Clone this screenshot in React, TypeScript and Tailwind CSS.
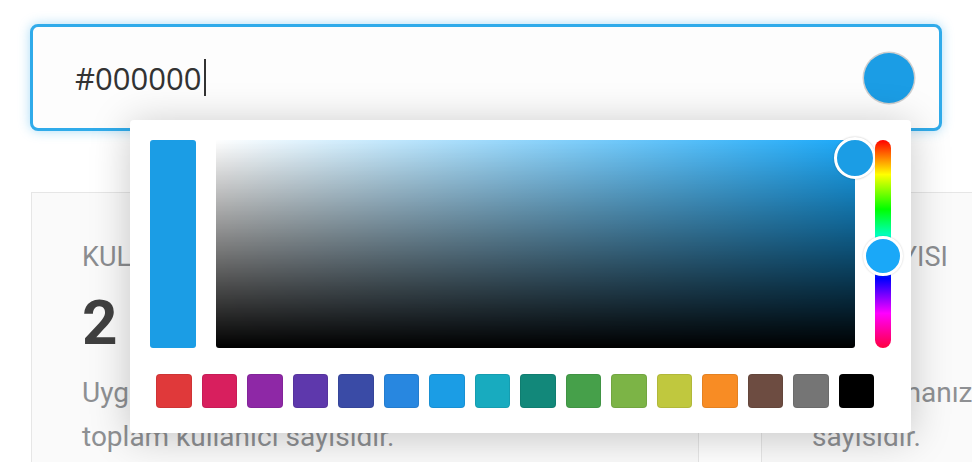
import React from 'react';

interface StatCard {
  label: string;
  value: number;
  lines: string[];
}

const swatches = [
  '#e0393a',
  '#d81f5e',
  '#8e28a6',
  '#5e38ac',
  '#3a4ba6',
  '#2887e0',
  '#1b9de5',
  '#18abbf',
  '#12887a',
  '#46a04a',
  '#7cb446',
  '#c0c83e',
  '#f88c24',
  '#6d4c41',
  '#757575',
  '#000000',
];

const stats: StatCard[] = [
  { label: 'Kullanıcı sayısı', value: 2, lines: ['Uygulamanızdaki', 'toplam kullanıcı sayısıdır.'] },
  { label: 'Rol sayısı', value: 3, lines: ['Uygulamanızdaki toplam rol', 'sayısıdır.'] },
];

const selected = '#1b9de5';
const hue = '#1aa8f8';

const ColorPopover: React.FC = () => (
  <div className="absolute left-[100px] top-[96px] z-10 w-[781px] rounded-[4px] bg-white px-[20px] pt-[20px] pb-[25px] shadow-[0_4px_40px_rgba(0,0,0,0.22)]">
    <div className="flex h-[208px] gap-[20px]">
      {/* current colour */}
      <div className="w-[46px] rounded-[3px]" style={{ backgroundColor: selected }} />

      {/* saturation / value area */}
      <div
        className="relative w-[640px] rounded-[3px]"
        style={{
          background: `linear-gradient(to top, #000, rgba(0,0,0,0)), linear-gradient(to right, #fff, ${hue})`,
        }}
      >
        <div
          className="absolute right-[-21px] top-[-3px] h-[42px] w-[42px] rounded-full border-[3px] border-white shadow-[0_0_2px_rgba(0,0,0,0.25)]"
          style={{ backgroundColor: selected }}
        />
      </div>

      {/* hue rail */}
      <div className="relative w-[16px] rounded-full bg-[linear-gradient(to_bottom,#ff0000_0%,#ffff00_16.6%,#00ff00_33.3%,#00ffff_50%,#0000ff_66.6%,#ff00ff_83.3%,#ff0040_100%)]">
        <div
          className="absolute left-[-12px] top-[96px] h-[40px] w-[40px] rounded-full border-[3px] border-white shadow-[0_0_2px_rgba(0,0,0,0.2)]"
          style={{ backgroundColor: hue }}
        />
      </div>
    </div>

    <div className="ml-[6px] mt-[26px] grid w-[718px] grid-cols-16 gap-[10px]">
      {swatches.map((c) => (
        <div
          key={c}
          className="h-[34px] rounded-[4px] shadow-[inset_0_0_0_1px_rgba(0,0,0,0.08)]"
          style={{ backgroundColor: c }}
        />
      ))}
    </div>
  </div>
);

const Card: React.FC<{ data: StatCard }> = ({ data }) => (
  <div className="h-[300px] w-[668px] shrink-0 border border-[#e6e6e6] bg-[#fafafa] px-[50px] pt-[44px] font-['Roboto',sans-serif]">
    <div className="text-[27px] uppercase leading-[40px] text-[#8b8d90]">{data.label}</div>
    <div className="mt-[15px] text-[62px] font-bold leading-none text-[#404040]">{data.value}</div>
    <p className="mt-[17px] text-[28px] leading-[44px] text-[#8e9093]">
      {data.lines[0]}
      <br />
      {data.lines[1]}
    </p>
  </div>
);

export default function App() {
  return (
    <div className="relative h-[462px] w-[972px] overflow-hidden bg-white px-[30px] pt-[24px]">
      <div className="relative">
        <div className="flex h-[107px] items-center rounded-[8px] border-[3px] border-[#30abea] bg-[#fdfdfd] pl-[42px] pr-[25px] shadow-[0_0_12px_rgba(48,171,234,0.4)]">
          <span className="font-['Open_Sans',sans-serif] text-[31px] leading-[42px] text-[#333]">#000000</span>
          <span className="ml-[3px] h-[37px] w-[2px] bg-[#333]" />
          <div
            className="ml-auto h-[50px] w-[50px] rounded-full shadow-[0_0_0_1.5px_rgba(0,0,0,0.18)]"
            style={{ backgroundColor: selected }}
          />
        </div>
        <ColorPopover />
      </div>

      <div className="ml-[1px] mt-[61px] flex gap-[62px]">
        {stats.map((s) => (
          <Card key={s.label} data={s} />
        ))}
      </div>
    </div>
  );
}
